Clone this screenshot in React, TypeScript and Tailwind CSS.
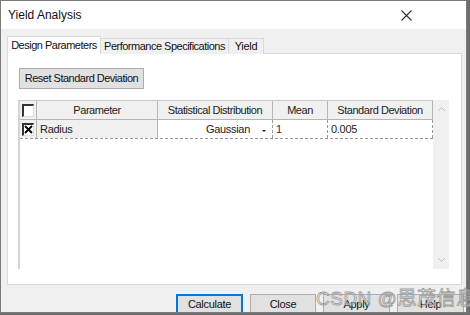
import React from "react";

const ui = { fontFamily: '"Liberation Sans", Arial, sans-serif' };
const tb = { fontFamily: '"Liberation Sans", Arial, sans-serif' };

function Btn({ label, focus, w }: { label: string; focus?: boolean; w: string }) {
  return (
    <div
      className={`h-[21px] shrink-0 ${w} flex items-center justify-center whitespace-nowrap text-[11px] tracking-[-0.3px] text-[#111] bg-[#e1e1e1] border ${
        focus ? "border-[#0078d7] shadow-[inset_0_0_0_1px_#0078d7]" : "border-[#adadad]"
      }`}
      style={ui}
    >
      {label}
    </div>
  );
}

export default function App() {
  return (
    <div className="w-[470px] h-[315px] bg-[#6e6e6e] relative overflow-hidden">
      <div className="w-[467px] h-[313px] border border-[#7a7a7a] bg-[#f0f0f0] flex flex-col overflow-hidden">
        {/* title bar */}
        <div className="h-[28px] shrink-0 bg-white flex items-center justify-between pl-[7px] pr-[54px]">
          <span className="text-[12px] text-[#111] whitespace-nowrap" style={ui}>Yield Analysis</span>
          <svg width="11" height="11" viewBox="0 0 11 11">
            <path d="M0.5 0.5 L10.5 10.5 M10.5 0.5 L0.5 10.5" stroke="#333" strokeWidth="1.1" />
          </svg>
        </div>
        {/* tabs */}
        <div className="pl-[6px] pt-[7px] flex items-end h-[25px] shrink-0 relative z-10">
          <div className="h-[18px] w-[94px] bg-white border border-b-0 border-[#d9d9d9] flex items-center justify-center whitespace-nowrap text-[11px] tracking-[-0.5px] text-[#111]" style={ui}>
            Design Parameters
          </div>
          <div className="h-[16px] w-[128px] bg-[#f0f0f0] border border-l-0 border-b-0 border-[#d9d9d9] flex items-center justify-center whitespace-nowrap text-[11px] tracking-[-0.5px] text-[#111]" style={ui}>
            Performance Specifications
          </div>
          <div className="h-[16px] w-[35px] bg-[#f0f0f0] border border-l-0 border-b-0 border-[#d9d9d9] flex items-center justify-center whitespace-nowrap text-[11px] tracking-[-0.3px] text-[#111]" style={ui}>
            Yield
          </div>
        </div>
        {/* panel */}
        <div className="ml-[6px] w-[455px] h-[232px] shrink-0 -mt-px bg-white border border-[#d9d9d9] flex flex-col">
          <div className="ml-[11px] mt-[14px] w-[125px] h-[21px] bg-[#e1e1e1] border border-[#adadad] flex items-center justify-center whitespace-nowrap text-[11px] tracking-[-0.5px] text-[#111]" style={ui}>
            Reset Standard Deviation
          </div>
          {/* table */}
          <div className="ml-[10px] mt-[11px] w-[431px] h-[169px] flex">
            <div className="w-[415px] h-full border-l-[2px] border-[#d4d4d4] border-t border-t-[#c8c8c8] flex flex-col">
              {/* header */}
              <div className="h-[19px] flex text-[11px] tracking-[-0.45px] text-[#222] bg-[#f0f0f0] whitespace-nowrap" style={tb}>
                <div className="w-[17px] border-r border-b border-[#b5b5b5] flex items-center justify-center">
                  <div className="w-[12px] h-[13px] bg-white border-t-2 border-l-2 border-[#333] border-r border-b border-r-[#ddd] border-b-[#ddd]" />
                </div>
                <div className="w-[121px] border-r border-b border-[#b5b5b5] flex items-center justify-center">Parameter</div>
                <div className="w-[115px] border-r border-b border-[#b5b5b5] flex items-center justify-center">Statistical Distribution</div>
                <div className="w-[55px] border-r border-b border-[#b5b5b5] flex items-center justify-center">Mean</div>
                <div className="w-[105px] border-r border-b border-[#b5b5b5] flex items-center justify-center">Standard Deviation</div>
              </div>
              {/* row */}
              <div className="h-[19px] flex text-[11px] tracking-[-0.3px] text-[#222] border-b border-dashed border-[#9a9a9a] whitespace-nowrap" style={tb}>
                <div className="w-[17px] bg-[#f0f0f0] border-r border-[#b5b5b5] flex items-center justify-center">
                  <div className="w-[12px] h-[13px] bg-white border-t-2 border-l-2 border-[#333] border-r border-b border-r-[#ddd] border-b-[#ddd] flex items-center justify-center">
                    <svg width="9" height="9" viewBox="0 0 9 9">
                      <path d="M1 1 L8 8 M8 1 L1 8" stroke="#000" strokeWidth="1.8" />
                    </svg>
                  </div>
                </div>
                <div className="w-[121px] bg-[#f0f0f0] border-r border-[#b5b5b5] flex items-center pl-[3px]">Radius</div>
                <div className="w-[115px] bg-white border-r border-dashed border-[#9a9a9a] flex items-center justify-end">
                  <span className="pr-[8px]">Gaussian</span>
                  <svg width="12" height="6" viewBox="0 0 12 6" className="mr-[2px] mt-[4px]">
                    <path d="M4 2 L8 2 L6 4 Z" fill="#222" />
                  </svg>
                </div>
                <div className="w-[55px] bg-white border-r border-dashed border-[#9a9a9a] flex items-center pl-[3px] text-[#5a1a1a]">1</div>
                <div className="w-[105px] bg-white border-r border-dashed border-[#9a9a9a] flex items-center pl-[3px]">0.005</div>
              </div>
              <div className="flex-1 bg-white" />
            </div>
            <div className="w-[16px] h-full bg-[#f0f0f0] flex flex-col items-center justify-between py-[6px]">
              <svg width="9" height="6" viewBox="0 0 9 6">
                <path d="M1 5 L4.5 1.5 L8 5" stroke="#c2c2c2" strokeWidth="1" fill="none" />
              </svg>
              <svg width="9" height="6" viewBox="0 0 9 6">
                <path d="M1 1 L4.5 4.5 L8 1" stroke="#c2c2c2" strokeWidth="1" fill="none" />
              </svg>
            </div>
          </div>
        </div>
        {/* buttons */}
        <div className="flex justify-end gap-[7px] pr-[2px] mt-[9px] shrink-0">
          <Btn label="Calculate" focus w="w-[67px]" />
          <Btn label="Close" w="w-[66px]" />
          <Btn label="Apply" w="w-[67px]" />
          <Btn label="Help" w="w-[67px]" />
        </div>
      </div>
      <div
        className="absolute left-[316px] top-[285px] text-[19px] text-white/40 [-webkit-text-stroke:0.8px_#9a9a9a] tracking-[0.5px] whitespace-nowrap"
        style={{ fontFamily: '"Liberation Sans", "Noto Sans CJK SC", sans-serif' }}
      >
        CSDN @思茂信息
      </div>
    </div>
  );
}
